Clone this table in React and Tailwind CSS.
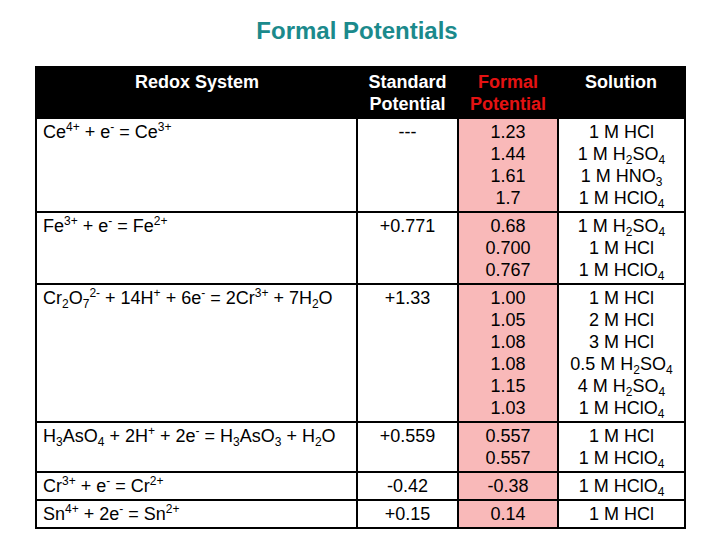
import React from "react";

const Sup = ({ children }) => (
  <span className="relative -top-[7px] text-[12px] leading-none">{children}</span>
);
const Sub = ({ children }) => (
  <span className="relative top-[4px] text-[12px] leading-none">{children}</span>
);

const rows = [
  {
    system: (
      <>
        Ce<Sup>4+</Sup> + e<Sup>-</Sup> = Ce<Sup>3+</Sup>
      </>
    ),
    standard: "---",
    formal: ["1.23", "1.44", "1.61", "1.7"],
    solution: [
      <>1 M HCl</>,
      <>1 M H<Sub>2</Sub>SO<Sub>4</Sub></>,
      <>1 M HNO<Sub>3</Sub></>,
      <>1 M HClO<Sub>4</Sub></>,
    ],
  },
  {
    system: (
      <>
        Fe<Sup>3+</Sup> + e<Sup>-</Sup> = Fe<Sup>2+</Sup>
      </>
    ),
    standard: "+0.771",
    formal: ["0.68", "0.700", "0.767"],
    solution: [
      <>1 M H<Sub>2</Sub>SO<Sub>4</Sub></>,
      <>1 M HCl</>,
      <>1 M HClO<Sub>4</Sub></>,
    ],
  },
  {
    system: (
      <>
        Cr<Sub>2</Sub>O<Sub>7</Sub><Sup>2-</Sup> + 14H<Sup>+</Sup> + 6e<Sup>-</Sup> = 2Cr<Sup>3+</Sup> + 7H<Sub>2</Sub>O
      </>
    ),
    standard: "+1.33",
    formal: ["1.00", "1.05", "1.08", "1.08", "1.15", "1.03"],
    solution: [
      <>1 M HCl</>,
      <>2 M HCl</>,
      <>3 M HCl</>,
      <>0.5 M H<Sub>2</Sub>SO<Sub>4</Sub></>,
      <>4 M H<Sub>2</Sub>SO<Sub>4</Sub></>,
      <>1 M HClO<Sub>4</Sub></>,
    ],
  },
  {
    system: (
      <>
        H<Sub>3</Sub>AsO<Sub>4</Sub> + 2H<Sup>+</Sup> + 2e<Sup>-</Sup> = H<Sub>3</Sub>AsO<Sub>3</Sub> + H<Sub>2</Sub>O
      </>
    ),
    standard: "+0.559",
    formal: ["0.557", "0.557"],
    solution: [<>1 M HCl</>, <>1 M HClO<Sub>4</Sub></>],
  },
  {
    system: (
      <>
        Cr<Sup>3+</Sup> + e<Sup>-</Sup> = Cr<Sup>2+</Sup>
      </>
    ),
    standard: "-0.42",
    formal: ["-0.38"],
    solution: [<>1 M HClO<Sub>4</Sub></>],
  },
  {
    system: (
      <>
        Sn<Sup>4+</Sup> + 2e<Sup>-</Sup> = Sn<Sup>2+</Sup>
      </>
    ),
    standard: "+0.15",
    formal: ["0.14"],
    solution: [<>1 M HCl</>],
  },
];

export default function App() {
  return (
    <div
      className="w-[720px] h-[540px] bg-white pt-[17px]"
      style={{ fontFamily: '"Liberation Sans", Arial, sans-serif' }}
    >
      <h1 className="text-center text-[24px] leading-[28px] font-bold text-[#1b8a8c] pr-[6px]">
        Formal Potentials
      </h1>
      <table className="mt-[21px] ml-[35px] table-fixed border-collapse border-2 border-black text-[18px] leading-[22px] text-black">
        <colgroup>
          <col className="w-[321px]" />
          <col className="w-[101px]" />
          <col className="w-[100px]" />
          <col className="w-[127px]" />
        </colgroup>
        <thead>
          <tr className="bg-black font-bold text-white align-top">
            <th className="pt-[3px] pb-[2px] font-bold">Redox System</th>
            <th className="pt-[3px] pb-[2px] font-bold">
              Standard
              <br />
              Potential
            </th>
            <th className="pt-[3px] pb-[2px] font-bold text-[#e41212]">
              Formal
              <br />
              Potential
            </th>
            <th className="pt-[3px] pb-[2px] font-bold">Solution</th>
          </tr>
        </thead>
        <tbody>
          {rows.map((r, i) => (
            <tr key={i} className="align-top">
              <td className="border-2 border-black pl-[6px] py-[2px] whitespace-nowrap">
                {r.system}
              </td>
              <td className="border-2 border-black text-center py-[2px]">
                {r.standard}
              </td>
              <td className="border-2 border-black bg-[#f9b9b9] text-center py-[2px]">
                {r.formal.map((f, j) => (
                  <div key={j}>{f}</div>
                ))}
              </td>
              <td className="border-2 border-black text-center py-[2px] whitespace-nowrap">
                {r.solution.map((s, j) => (
                  <div key={j}>{s}</div>
                ))}
              </td>
            </tr>
          ))}
        </tbody>
      </table>
    </div>
  );
}
